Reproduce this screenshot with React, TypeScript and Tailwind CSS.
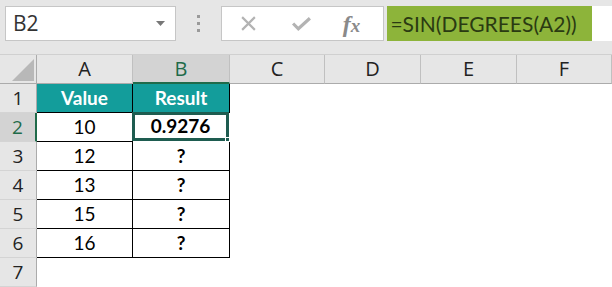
import React from "react";

const cols = ["A", "B", "C", "D", "E", "F"];
const colW = ["w-[96px]", "w-[97px]", "w-[95px]", "w-[96px]", "w-[96px]", "w-[95px]"];

const data: [string, string][] = [
  ["10", "0.9276"],
  ["12", "?"],
  ["13", "?"],
  ["15", "?"],
  ["16", "?"],
];

function ColHeader({ label, width, active }: { label: string; width: string; active?: boolean }) {
  return (
    <div
      className={`${width} h-[29px] flex items-center justify-center border-r border-[#c0c0c0] text-[20px] ${
        active ? "bg-[#d3d3d3] text-[#1f6b4a] border-b-2 border-b-[#1f6b4a]" : "bg-[#e6e6e6] text-[#222] border-b border-b-[#ababab]"
      }`}
    >
      {label}
    </div>
  );
}

function RowHeader({ n, active }: { n: number; active?: boolean }) {
  return (
    <div
      className={`w-[37px] h-[29px] flex items-center justify-center text-[19px] border-b border-[#d4d4d4] ${
        active ? "bg-[#d3d3d3] text-[#1f6b4a] border-r-2 border-r-[#1f6b4a]" : "bg-[#e6e6e6] text-[#222] border-r border-r-[#ababab]"
      }`}
    >
      {n}
    </div>
  );
}

export default function App() {
  return (
    <div className="w-[612px] h-[287px] overflow-hidden bg-white" style={{ fontFamily: "'Open Sans', sans-serif" }}>
      {/* formula bar */}
      <div className="h-[55px] bg-[#e6e6e6] border-b border-[#d0d0d0] flex items-start pt-[6px]">
        <div className="ml-[5px] w-[171px] h-[35px] bg-white border border-[#c6c6c6] flex items-center justify-between pl-[7px] pr-[10px]">
          <span className="text-[21px] text-[#333]">B2</span>
          <svg width="9" height="5" viewBox="0 0 9 5">
            <path d="M0 0 L9 0 L4.5 5 Z" fill="#777" />
          </svg>
        </div>
        <div className="w-[45px] h-[35px] flex flex-col items-center justify-center gap-[4px]">
          <div className="w-[3px] h-[3px] bg-[#9a9a9a]" />
          <div className="w-[3px] h-[3px] bg-[#9a9a9a]" />
          <div className="w-[3px] h-[3px] bg-[#9a9a9a]" />
        </div>
        <div className="w-[164px] h-[35px] bg-white border border-[#c6c6c6] flex items-center">
          <svg className="ml-[18px]" width="17" height="17" viewBox="0 0 16 16">
            <path d="M2 2 L14 14 M14 2 L2 14" stroke="#b3b3b3" strokeWidth="2" />
          </svg>
          <svg className="ml-[34px]" width="21" height="17" viewBox="0 0 20 16">
            <path d="M2 8 L7 13 L18 3" stroke="#b3b3b3" strokeWidth="3" fill="none" />
          </svg>
          <span
            className="ml-[31px] text-[24px] italic text-[#8a8a8a] font-semibold leading-none"
            style={{ fontFamily: "'Liberation Serif', serif" }}
          >
            f<span className="text-[19px]">x</span>
          </span>
        </div>
        <div className="ml-[3px] w-[205px] h-[35px] bg-[#8db43a] flex items-center pl-[3px]">
          <span className="text-[21px] text-[#2a3a12]" style={{ fontFamily: "'Lato', sans-serif" }}>
            =SIN(DEGREES(A2))
          </span>
        </div>
        <div className="w-[20px] h-[35px] bg-white" />
      </div>

      {/* column headers */}
      <div className="flex">
        <div className="w-[37px] h-[29px] bg-[#e6e6e6] border-r border-b border-[#ababab] flex items-end justify-end pr-[2px] pb-[2px]">
          <svg width="22" height="22" viewBox="0 0 22 22">
            <path d="M22 0 L22 22 L0 22 Z" fill="#b8b8b8" />
          </svg>
        </div>
        {cols.map((c, i) => (
          <ColHeader key={c} label={c} width={colW[i]} active={c === "B"} />
        ))}
      </div>

      {/* rows */}
      <div className="flex" style={{ fontFamily: "'Lato', sans-serif" }}>
        <div className="flex flex-col" style={{ fontFamily: "'Open Sans', sans-serif" }}>
          {[1, 2, 3, 4, 5, 6, 7].map((n) => (
            <RowHeader key={n} n={n} active={n === 2} />
          ))}
        </div>
        <div className="flex flex-col">
          <div className="flex">
            <div className="w-[96px] h-[29px] bg-[#139d9b] text-white font-bold text-[19px] flex items-center justify-center border-r border-b border-black">
              Value
            </div>
            <div className="w-[97px] h-[29px] bg-[#139d9b] text-white font-bold text-[19px] flex items-center justify-center border-r border-b border-black">
              Result
            </div>
          </div>
          {data.map(([a, b], i) => (
            <div key={i} className="flex">
              <div className="w-[96px] h-[29px] text-[19px] text-black flex items-center justify-center border-r border-b border-black">
                {a}
              </div>
              {i === 0 ? (
                <div className="relative w-[97px] h-[29px] -mt-px -ml-px mb-px border-[3px] border-[#1e5c50] text-[19px] font-bold text-black flex items-center justify-center">
                  {b}
                  <div className="absolute -right-[4px] -bottom-[4px] w-[5px] h-[5px] bg-[#1e5c50] border border-white" />
                </div>
              ) : (
                <div className="w-[97px] h-[29px] text-[19px] font-bold text-black flex items-center justify-center border-r border-b border-black">
                  {b}
                </div>
              )}
            </div>
          ))}
        </div>
      </div>
    </div>
  );
}
